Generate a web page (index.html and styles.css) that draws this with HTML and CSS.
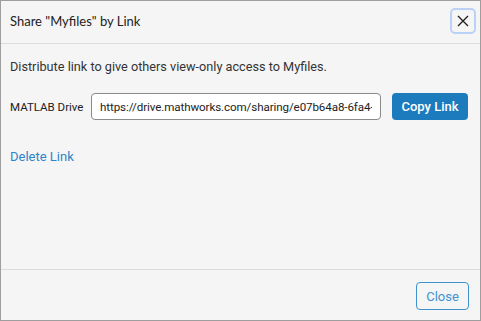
FILE: index.html
```html
<!DOCTYPE html>
<html lang="en">
<head>
    <meta charset="UTF-8">
    <title>Share by Link</title>
    <link rel="stylesheet" href="styles.css">
</head>
<body>
    <div class="dialog">
        <header class="dialog-header">
            <h1>Share "Myfiles" by Link</h1>
            <button class="close-x" aria-label="Close">
                <svg width="12" height="12" viewBox="0 0 12 12">
                    <path d="M1 1 L11 11 M11 1 L1 11" stroke="#222" stroke-width="1.4" fill="none"/>
                </svg>
            </button>
        </header>

        <section class="dialog-body">
            <p class="intro">Distribute link to give others view-only access to Myfiles.</p>
            <div class="link-row">
                <label for="linkInput">MATLAB Drive</label>
                <input type="text" id="linkInput" value="https://drive.mathworks.com/sharing/e07b64a8-6fa4-4b2c-9d1e-3f5a8c7b2e10" readonly>
                <button class="copy-btn">Copy Link</button>
            </div>
            <a href="#" class="delete-link">Delete Link</a>
        </section>

        <footer class="dialog-footer">
            <button class="close-btn">Close</button>
        </footer>
    </div>
</body>
</html>
```

FILE: styles.css
```css
* {
    margin: 0;
    padding: 0;
    box-sizing: border-box;
}

body {
    font-family: 'Roboto', 'Liberation Sans', sans-serif;
    color: #333;
    background-color: #f5f5f5;
}

.dialog {
    width: 481px;
    height: 321px;
    border: 1px solid #9e9e9e;
    background-color: #f5f5f5;
    display: flex;
    flex-direction: column;
}

.dialog-header {
    height: 43px;
    border-bottom: 1px solid #dcdcdc;
    display: flex;
    align-items: center;
    justify-content: space-between;
    padding: 0 4px 0 9px;
}

.dialog-header h1 {
    font-family: 'Lato', 'Open Sans', sans-serif;
    font-size: 13px;
    font-weight: normal;
    color: #222;
    margin-top: -2px;
}

.close-x {
    width: 26px;
    height: 26px;
    border: 2px solid #b9d2f6;
    border-radius: 5px;
    background-color: #f5f5f5;
    display: flex;
    align-items: center;
    justify-content: center;
    margin-top: -2px;
    cursor: pointer;
}

.dialog-body {
    flex: 1;
    padding: 15px 12px 0 9px;
}

.intro {
    font-size: 12.7px;
    color: #333;
}

.link-row {
    display: flex;
    align-items: center;
    margin-top: 19px;
}

.link-row label {
    font-size: 11.5px;
    color: #222;
    width: 81px;
}

#linkInput {
    width: 290px;
    height: 27px;
    border: 1px solid #8a8a8a;
    border-radius: 4px;
    background-color: #fff;
    padding: 0 8px;
    font-family: 'Roboto', 'Liberation Sans', sans-serif;
    font-size: 11.6px;
    letter-spacing: -0.1px;
    color: #222;
}

.copy-btn {
    margin-left: 11px;
    width: 76px;
    height: 27px;
    border: none;
    border-radius: 4px;
    background-color: #1b7bbd;
    color: #fff;
    font-family: 'Roboto', 'Liberation Sans', sans-serif;
    font-size: 13px;
    font-weight: 500;
    cursor: pointer;
}

.delete-link {
    display: inline-block;
    margin-top: 29px;
    font-size: 13px;
    color: #2d84c8;
    text-decoration: none;
}

.dialog-footer {
    height: 51px;
    border-top: 1px solid #dcdcdc;
    display: flex;
    justify-content: flex-end;
    align-items: flex-start;
    padding: 12px 11px 0 0;
}

.close-btn {
    width: 53px;
    height: 28px;
    border: 1px solid #3e92cf;
    border-radius: 4px;
    background-color: #f5f5f5;
    color: #3e92cf;
    font-family: 'Roboto', 'Liberation Sans', sans-serif;
    font-size: 13px;
    cursor: pointer;
}
```
